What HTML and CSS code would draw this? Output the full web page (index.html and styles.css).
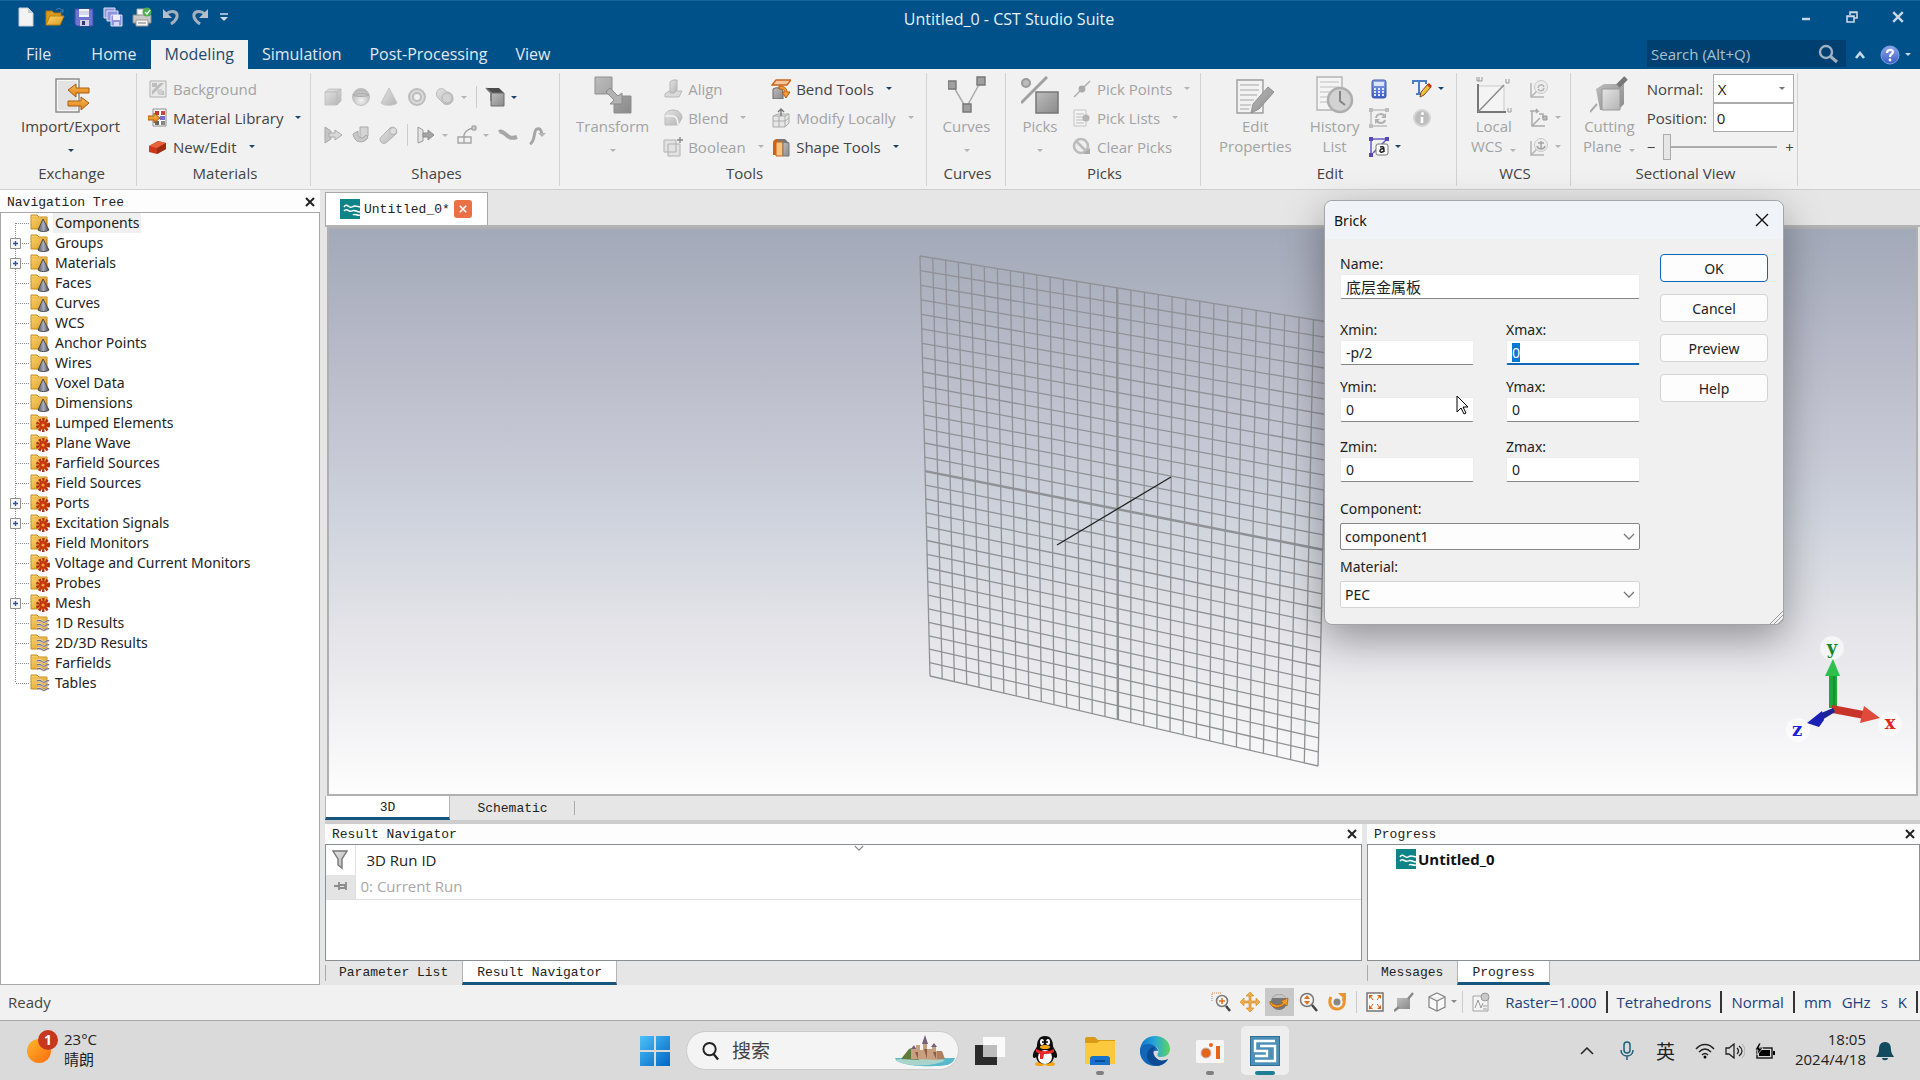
FILE: index.html
```html
<!DOCTYPE html>
<html lang="en">
<head>
    <meta charset="UTF-8">
    <meta name="viewport" content="width=device-width, initial-scale=1.0">
    <title>Untitled_0 - CST Studio Suite</title>
    <link rel="stylesheet" href="styles.css">
</head>
<body>
    <!-- Icon sprite -->
    <svg class="sprite" aria-hidden="true">
        <defs>
            <linearGradient id="gGray" x1="0" y1="0" x2="1" y2="1"><stop offset="0" stop-color="#e4e4e4"/><stop offset="1" stop-color="#b4b4b4"/></linearGradient>
            <linearGradient id="gDark" x1="0" y1="0" x2="1" y2="1"><stop offset="0" stop-color="#bdbdbd"/><stop offset="1" stop-color="#8a8a8a"/></linearGradient>
            <linearGradient id="gFolder" x1="0" y1="0" x2="1" y2="1"><stop offset="0" stop-color="#fbd674"/><stop offset="1" stop-color="#dd9a1c"/></linearGradient>
            <linearGradient id="gOrange" x1="0" y1="0" x2="0" y2="1"><stop offset="0" stop-color="#fbb84e"/><stop offset="1" stop-color="#e0801a"/></linearGradient>
            <linearGradient id="gCone" x1="0" y1="0" x2="1" y2="0"><stop offset="0" stop-color="#55565a"/><stop offset=".5" stop-color="#a9adc0"/><stop offset="1" stop-color="#45464a"/></linearGradient>
            <linearGradient id="gWin" x1="0" y1="0" x2="1" y2="1"><stop offset="0" stop-color="#4cc2f8"/><stop offset="1" stop-color="#0064c4"/></linearGradient>
            <linearGradient id="gSun" x1="0" y1="0" x2="1" y2="1"><stop offset="0" stop-color="#fbb829"/><stop offset="1" stop-color="#fb6a10"/></linearGradient>
            <linearGradient id="gEdge" x1="0" y1="0" x2="1" y2="0"><stop offset="0" stop-color="#0f6fc9"/><stop offset=".5" stop-color="#28a9d8"/><stop offset="1" stop-color="#5fd45c"/></linearGradient>
            <linearGradient id="gBlue" x1="0" y1="0" x2="0" y2="1"><stop offset="0" stop-color="#8fa6ec"/><stop offset="1" stop-color="#3a5cc4"/></linearGradient>
            <radialGradient id="gBall" cx=".5" cy=".7" r=".6"><stop offset="0" stop-color="#f2f2f2"/><stop offset="1" stop-color="#b8b8b8"/></radialGradient>
        </defs>
        <symbol id="arrow" viewBox="0 0 8 5"><path d="M1 1h6L4 4z" fill="currentColor"/></symbol>
        <symbol id="chevron" viewBox="0 0 12 8"><path d="M1 1l5 5 5-5" fill="none" stroke="currentColor" stroke-width="1.3"/></symbol>
        <symbol id="cross" viewBox="0 0 10 10"><path d="M1 1l8 8M9 1L1 9" fill="none" stroke="currentColor" stroke-width="2"/></symbol>
        <symbol id="cross-thin" viewBox="0 0 14 14"><path d="M1 1l12 12M13 1L1 13" fill="none" stroke="currentColor" stroke-width="1.4"/></symbol>

        <!-- quick access -->
        <symbol id="new" viewBox="0 0 20 20"><path d="M3 1h9l5 5v13H3z" fill="#f3f3f3" stroke="#c9cfd4"/><path d="M12 1v5h5z" fill="#c8cccf"/></symbol>
        <symbol id="open" viewBox="0 0 20 20"><path d="M1 18V4h6l2 2h7v4" fill="#d99a20" stroke="#b67508"/><path d="M1 18l4-9h14l-4 9z" fill="url(#gFolder)" stroke="#c0820e"/><path d="M11 3c3-3 6-1 7 2m0-3v3h-3" fill="none" stroke="#5580a8"/></symbol>
        <symbol id="save" viewBox="0 0 20 20"><path d="M1 2h18v17H3l-2-2z" fill="#6e74d4" stroke="#4347a4"/><path d="M5 2h10v8H5z" fill="#f2f4fa"/><path d="M5 5h10M5 7h10" stroke="#b5bbd4"/><path d="M6 13h9v6H6z" fill="#cfd2e2"/><path d="M8 14h3v4H8z" fill="#33367c"/></symbol>
        <symbol id="saveall" viewBox="0 0 20 20"><g fill="#8d93dd" stroke="#dfe2f6"><path d="M1 1h11v10H1z"/><path d="M4 4h11v10H4z"/><path d="M8 8h11v11H8z"/></g><path d="M10 8h7v5h-7z" fill="#eef"/><path d="M11 15h5v4h-5z" fill="#d4d7ee"/></symbol>
        <symbol id="print" viewBox="0 0 20 20"><path d="M5 2h9v8H5z" fill="#fafafa" stroke="#aaa"/><path d="M1 8h18v8H1z" fill="#c9c9c9" stroke="#8d8d8d"/><path d="M4 13h12v6H4z" fill="#f4f4f4" stroke="#999"/><path d="M6 16h8" stroke="#777"/><circle cx="15" cy="5" r="4.5" fill="#4caf50"/><path d="M13 5l2 2 3-4" fill="none" stroke="#fff" stroke-width="1.3"/></symbol>
        <symbol id="undo" viewBox="0 0 20 20"><path d="M5 7c6-5 12-2 11 3-1 3-3 5-6 7" fill="none" stroke="#a4b1bd" stroke-width="3"/><path d="M2 2v9h9z" fill="#b7c0c9"/></symbol>
        <symbol id="redo" viewBox="0 0 20 20"><path d="M15 7c-6-5-12-2-11 3 1 3 3 5 6 7" fill="none" stroke="#a4b1bd" stroke-width="3"/><path d="M18 2v9H9z" fill="#b7c0c9"/></symbol>
        <symbol id="more" viewBox="0 0 10 10"><path d="M1 2h8" stroke="#cfdbe6" stroke-width="1.5"/><path d="M1 5h8L5 9z" fill="#cfdbe6"/></symbol>
        <symbol id="minimize" viewBox="0 0 12 12"><path d="M2 8h8" stroke="#c9d8e6" stroke-width="2.4"/></symbol>
        <symbol id="restore" viewBox="0 0 12 12"><path d="M4 4V1h7v6H8M1 5h7v6H1zM1 5.500h7M4 1.500h7" fill="none" stroke="#c9d8e6" stroke-width="1.6"/></symbol>
        <symbol id="magnifier" viewBox="0 0 20 20"><circle cx="8" cy="8" r="6" fill="none" stroke="#9fb2c2" stroke-width="2.400"/><path d="M12 12l7 6" stroke="#9fb2c2" stroke-width="3"/></symbol>
        <symbol id="collapse" viewBox="0 0 12 8"><path d="M2 7l4-5 4 5" fill="none" stroke="#c9d8e6" stroke-width="2.600"/></symbol>
        <symbol id="help" viewBox="0 0 20 20"><circle cx="10" cy="10" r="9" fill="url(#gBlue)" stroke="#7fa0e0"/><path d="M7 8c0-4 6-4 6-1 0 2-3 2-3 5" fill="none" stroke="#fff" stroke-width="2.200"/><circle cx="10" cy="15" r="1.400" fill="#fff"/></symbol>

        <!-- ribbon -->
        <symbol id="exchange" viewBox="0 0 38 38"><path d="M4 3h23v33H4z" fill="#f8f8f8" stroke="#8c8c8c" stroke-width="1.5"/><path d="M6 5h19v29H6z" fill="#e3e3e3"/><path d="M16 14l8-6v4h13v5H24v4z" fill="url(#gOrange)" stroke="#a85c10"/><path d="M37 27l-8-6v4H16v5h13v4z" fill="url(#gOrange)" stroke="#a85c10"/></symbol>
        <symbol id="background" viewBox="0 0 20 20"><path d="M2 2h16v16H2z" fill="#e9e9e9" stroke="#b0b0b0"/><path d="M4 4h5v4H4zM4 12l8-8h4L4 16zM11 12h5v4h-5z" fill="#bcbcbc"/><circle cx="12" cy="13" r="3" fill="#cfcfcf"/></symbol>
        <symbol id="library" viewBox="0 0 20 20"><path d="M5 1h13v17H5z" fill="#fafafa" stroke="#8c8c8c"/><path d="M7 3h4v4H7z" fill="#c0392b"/><path d="M13 3h4v4h-4z" fill="#c44"/><path d="M12 8h5v4h-5z" fill="#7a6cc4"/><path d="M7 13h4v4H7z" fill="#666"/><path d="M13 13h4v4h-4z" fill="#888"/><path d="M0 8h6V5l6 5-6 5v-3H0z" fill="url(#gOrange)" stroke="#a85c10"/></symbol>
        <symbol id="newedit" viewBox="0 0 20 20"><path d="M1 9l9-5 8 2v6l-9 5-8-2z" fill="#c93a1c"/><path d="M1 9l9-5 8 2-9 5z" fill="#e8623c"/><path d="M9 11v6l9-5V6z" fill="#a42a12"/></symbol>
        <symbol id="brick" viewBox="0 0 20 20"><path d="M2 5l4-3h12v12l-4 4H2z" fill="url(#gGray)" stroke="#c4c4c4"/><path d="M2 5h12v13M14 5l4-3" fill="none" stroke="#bbb"/></symbol>
        <symbol id="sphere" viewBox="0 0 20 20"><circle cx="10" cy="10" r="8.500" fill="url(#gBall)" stroke="#c2c2c2"/><path d="M2 8c4-2 12-2 16 0-4 2-12 2-16 0z" fill="#c4c4c4" stroke="#aaa"/></symbol>
        <symbol id="cone" viewBox="0 0 20 20"><path d="M10 1l8 15c-3 3-13 3-16 0z" fill="url(#gGray)" stroke="#c4c4c4"/></symbol>
        <symbol id="torus" viewBox="0 0 20 20"><circle cx="10" cy="10" r="6" fill="none" stroke="#bdbdbd" stroke-width="6"/><circle cx="10" cy="10" r="6" fill="none" stroke="#dadada" stroke-width="2"/></symbol>
        <symbol id="cylinder" viewBox="0 0 20 20"><path d="M3 3c3-3 6-1 9 2 4 0 6 3 6 7s-5 7-9 5l-6-6c-2-2-2-6 0-8z" fill="url(#gGray)" stroke="#bbb"/><circle cx="12" cy="11" r="5" fill="#d2d2d2" stroke="#b5b5b5"/></symbol>
        <symbol id="faceted" viewBox="0 0 20 20"><path d="M1 1h13l5 5H7z" fill="#4c4c4c"/><path d="M6 6h13v13H6z" fill="url(#gDark)" stroke="#6f6f6f"/><path d="M1 1l5 5v8" fill="none" stroke="#777" stroke-width="1.5"/></symbol>
        <symbol id="extrude" viewBox="0 0 20 20"><path d="M2 2l6 4v8l-6 4z" fill="#c4c4c4" stroke="#aaa"/><path d="M6 8h6V5l7 5-7 5v-3H6z" fill="#d8d8d8" stroke="#aaa"/></symbol>
        <symbol id="rotate" viewBox="0 0 20 20"><path d="M9 2h8v9l-5 3H9z" fill="#d4d4d4" stroke="#aaa"/><path d="M2 9l5-3v3c0 5 6 5 8 1l2 2c-2 6-13 8-15-3z" fill="#c8c8c8" stroke="#a8a8a8"/></symbol>
        <symbol id="loft" viewBox="0 0 20 20"><path d="M2 12L11 3c3-3 9 2 6 6l-9 8c-4 4-9-1-6-5z" fill="url(#gGray)" stroke="#b2b2b2"/><circle cx="14" cy="6" r="3.500" fill="#dedede" stroke="#b2b2b2"/></symbol>
        <symbol id="sheet" viewBox="0 0 20 20"><path d="M2 2v16l5-2V5z" fill="#e4e4e4" stroke="#9a9a9a"/><path d="M7 8h5V5l6 5-6 5v-3H7z" fill="#a4a4a4" stroke="#8e8e8e"/></symbol>
        <symbol id="trace" viewBox="0 0 20 20"><path d="M1 12h13v6H1zM7 18V10c1-4 5-6 9-7" fill="none" stroke="#a4a4a4" stroke-width="1.4"/><path d="M15 1h4v4h-4z" fill="#ccc" stroke="#999"/></symbol>
        <symbol id="wave" viewBox="0 0 20 20"><path d="M1 7c6-3 7 9 18 5" fill="none" stroke="#a6a6a6" stroke-width="4"/></symbol>
        <symbol id="hook" viewBox="0 0 20 20"><path d="M4 19c6-3 3-14 7-15 3-1 4 1 5 5" fill="none" stroke="#a6a6a6" stroke-width="3"/><path d="M12 8h8l-4 4z" fill="#b5b5b5"/></symbol>
        <symbol id="transform" viewBox="0 0 38 38"><path d="M1 1h17v17H1zM20 20h17v17H20z" fill="url(#gDark)" stroke="#8f8f8f"/><path d="M12 16l4-4 8 8 4-3v11H16l4-4z" fill="#b3b3b3" stroke="#8a8a8a"/></symbol>
        <symbol id="align" viewBox="0 0 20 20"><path d="M2 15l4-3h13l-3 6H2z" fill="#dadada" stroke="#b9b9b9"/><path d="M7 3l3-2h4v10l-3 3H7z" fill="url(#gGray)" stroke="#b4b4b4"/></symbol>
        <symbol id="blend" viewBox="0 0 20 20"><path d="M2 8c0-4 4-6 8-6 5 0 9 3 9 8l-4 7H2z" fill="url(#gGray)" stroke="#bbb"/><path d="M2 8h7c4 0 6 4 6 9" fill="none" stroke="#f4f4f4" stroke-width="1.5"/></symbol>
        <symbol id="boolean" viewBox="0 0 20 20"><path d="M1 3h12v12H1zM5 7h12v12H5z" fill="#dcdcdc" fill-opacity=".7" stroke="#b0b0b0"/><path d="M17 0v6M14 3h6" stroke="#888" stroke-width="1.3"/></symbol>
        <symbol id="bend" viewBox="0 0 20 20"><path d="M5 1h15l-4 5H1z" fill="#f7c59a" stroke="#c8641c" stroke-width="1.4"/><path d="M2 10c5-3 10 0 10 3v7H2z" fill="url(#gDark)" stroke="#666"/><path d="M8 7c5 0 8 2 8 6h3l-4 6-4-6h3c0-2-2-3-6-3z" fill="#f09a3a" stroke="#b85a10"/></symbol>
        <symbol id="modify" viewBox="0 0 20 20"><path d="M2 8l5-2h11v9l-4 4H2zM2 8h12v11M14 8l4-2M2 13h12l4-3M8 8v11" fill="#e6e6e6" stroke="#ababab"/><path d="M10 8V1M7 4l3-3 3 3" fill="none" stroke="#777" stroke-width="1.4"/></symbol>
        <symbol id="shape" viewBox="0 0 20 20"><path d="M5 2h9l4 4H4z" fill="#777"/><path d="M2 6c0-3 2-4 5-4v16H2z" fill="#c8641c"/><path d="M5 5h7v14H5z" fill="#fbc27a" stroke="#c8641c"/><path d="M12 5l6 1v13h-6z" fill="url(#gDark)" stroke="#777"/></symbol>
        <symbol id="curves" viewBox="0 0 38 38"><path d="M4 8l14 24L33 5" fill="none" stroke="#aaa" stroke-width="1.5"/><path d="M0 5h8v8H0zM29 1h8v8h-8zM15 28h8v8h-8z" fill="#a0a0a0" stroke="#777" stroke-width="1.4"/></symbol>
        <symbol id="picks" viewBox="0 0 38 38"><circle cx="5" cy="7" r="4" fill="#bbb" stroke="#999" stroke-width="2"/><path d="M0 27L26 1" stroke="#a0a0a0" stroke-width="3"/><path d="M15 16h22v21H15z" fill="url(#gDark)" stroke="#777" stroke-width="1.5"/></symbol>
        <symbol id="pickpoints" viewBox="0 0 20 20"><path d="M2 18L18 2" stroke="#b0b0b0" stroke-width="1.6"/><circle cx="10" cy="10" r="3.400" fill="#aaa"/></symbol>
        <symbol id="picklists" viewBox="0 0 20 20"><path d="M2 2h12v16H2z" fill="#f4f4f4" stroke="#c4c4c4"/><path d="M4 6h8M4 9h8M4 12h8M4 15h8" stroke="#bbb"/><circle cx="14" cy="10" r="3.500" fill="#b4b4b4"/></symbol>
        <symbol id="clearpicks" viewBox="0 0 20 20"><circle cx="9" cy="9" r="7" fill="#eee" stroke="#bcbcbc" stroke-width="2.600"/><path d="M4 4l11 11" stroke="#bcbcbc" stroke-width="2.600"/><path d="M11 17h7v-6z" fill="#aaa"/></symbol>
        <symbol id="properties" viewBox="0 0 38 38"><path d="M1 4h26v33H1z" fill="#f2f2f2" stroke="#9d9d9d" stroke-width="1.400"/><path d="M4 9h19M4 14h19M4 19h17M4 24h14M4 29h11M4 33h9" stroke="#c0c0c0" stroke-width="1.5"/><path d="M15 37l2-9 15-17 6 5-15 17z" fill="url(#gDark)" stroke="#909090"/></symbol>
        <symbol id="history" viewBox="0 0 38 38"><path d="M1 1h25v33H1z" fill="#f4f4f4" stroke="#b4b4b4" stroke-width="1.4"/><path d="M4 6h19M4 11h19M4 16h10M4 21h8M4 26h8" stroke="#cfcfcf" stroke-width="1.5"/><circle cx="24" cy="24" r="12" fill="#d2d2d2" stroke="#adadad" stroke-width="2.500"/><path d="M24 15v10l5 4" fill="none" stroke="#848484" stroke-width="2"/></symbol>
        <symbol id="calc" viewBox="0 0 20 20"><rect x="3" y="1" width="14" height="18" rx="2" fill="url(#gBlue)" stroke="#4558a8"/><path d="M5 3h10v4H5z" fill="#dde4fb"/><path d="M5 10h10M5 13h10M5 16h10" stroke="#e2e8fc" stroke-width="1.8" stroke-dasharray="2 2"/></symbol>
        <symbol id="refresh" viewBox="0 0 20 20"><path d="M2 18V2h16M2 18h16" fill="none" stroke="#bdbdbd" stroke-width="1.500"/><path d="M0 0h4v4H0zM16 0h4v4h-4zM0 16h4v4H0z" fill="#bdbdbd"/><path d="M7 10c1-5 7-5 9-1M16 12c-1 4-7 4-9 0" fill="none" stroke="#b0b0b0" stroke-width="2"/><path d="M17 5v5h-5zM6 16v-5h5z" fill="#b0b0b0"/></symbol>
        <symbol id="param" viewBox="0 0 20 20"><path d="M2 18V2h16L4 16" fill="none" stroke="#6a5cc8" stroke-width="1.5"/><path d="M0 0h4v4H0zM16 0h4v4h-4zM0 16h4v4H0z" fill="#5648b8"/><rect x="7" y="7" width="12" height="11" rx="2" fill="#fafafa" stroke="#777"/><path d="M11 10c4-1 4 0 4 5m0-3c-5-1-5 4-2 3 1 0 2-1 2-2" fill="none" stroke="#222" stroke-width="1.500"/></symbol>
        <symbol id="textedit" viewBox="0 0 20 20"><path d="M1 5V2h13v3M7 2v13M4 15h6" fill="none" stroke="#4a7ac8" stroke-width="2"/><path d="M8 18l1-5 7-8 3 3-7 8z" fill="#f0c040" stroke="#7a4a18"/><path d="M15 6l2-2 3 3-2 2z" fill="#c83020"/></symbol>
        <symbol id="info" viewBox="0 0 20 20"><circle cx="10" cy="10" r="8" fill="#bdbdbd" stroke="#d4d4d4" stroke-width="2"/><path d="M10 9v6" stroke="#fff" stroke-width="2.600"/><circle cx="10.500" cy="5.500" r="1.500" fill="#fff"/></symbol>
        <symbol id="wcs" viewBox="0 0 38 38"><path d="M3 10h26v26H3z" fill="#f4f4f4" stroke="#c9c9c9"/><path d="M3 8v28h28" fill="none" stroke="#777" stroke-width="2"/><path d="M3 36L29 9" stroke="#888" stroke-width="1.4"/><path d="M2 1v4h5V1M4 1v4M31 3v4h3V3M33 32v4h3v-4" fill="none" stroke="#999"/></symbol>
        <symbol id="wcs1" viewBox="0 0 20 20"><path d="M2 4v14h13M2 18l6-6" fill="none" stroke="#b4b4b4" stroke-width="1.500"/><circle cx="12" cy="8" r="6.500" fill="#ededed" stroke="#c9c9c9"/><path d="M9 9c1-4 5-4 6-1M15 9c-1 4-5 3-6 1" fill="none" stroke="#b4b4b4" stroke-width="1.5"/></symbol>
        <symbol id="wcs2" viewBox="0 0 20 20"><path d="M3 3v15h13M3 18l8-8M1 3h8l-2-2m2 2L7 5M10 6h4v4" fill="none" stroke="#a9a9a9" stroke-width="1.500"/><path d="M14 8h4v4h-4z" fill="#bbb" stroke="#999"/></symbol>
        <symbol id="wcs3" viewBox="0 0 20 20"><path d="M2 4v14h13M2 18l6-6" fill="none" stroke="#b4b4b4" stroke-width="1.500"/><circle cx="12" cy="8" r="6.500" fill="#ededed" stroke="#c9c9c9"/><path d="M12 4v8M9 6h6M8 9c1 4 7 4 8 0" fill="none" stroke="#a4a4a4" stroke-width="1.5"/></symbol>
        <symbol id="cutting" viewBox="0 0 38 38"><path d="M6 13l8-5h20v20l-6 6H10z" fill="url(#gDark)"/><path d="M12 13h18v21H12z" fill="url(#gGray)" stroke="#999"/><path d="M0 36l7-8M27 9l9-7" stroke="#aaa" stroke-width="2"/><path d="M28 10l8-8" stroke="#777" stroke-width="5"/></symbol>

        <!-- tree -->
        <symbol id="twig" viewBox="0 0 20 20"><path d="M5.500 0v20M6 10.500h13" stroke="#888" stroke-dasharray="1 1"/></symbol>
        <symbol id="twig-first" viewBox="0 0 20 20"><path d="M5.500 10v10M6 10.500h13" stroke="#888" stroke-dasharray="1 1"/></symbol>
        <symbol id="twig-last" viewBox="0 0 20 20"><path d="M5.500 0v10M6 10.500h13" stroke="#888" stroke-dasharray="1 1"/></symbol>
        <symbol id="twig-plus" viewBox="0 0 20 20"><path d="M5.500 0v20M12 10.500h7" stroke="#888" stroke-dasharray="1 1"/><path d="M.5 5.500h10v10H.5z" fill="#f6f6f6" stroke="#919191"/><path d="M3 10.500h5M5.500 8v5" stroke="#2f4f9f" stroke-width="1.300"/></symbol>
        <symbol id="folder" viewBox="0 0 20 20"><path d="M1 16V2h6l2 2h8v12z" fill="url(#gFolder)" stroke="#c58a18"/><path d="M1 5h16" stroke="#e9b345"/></symbol>
        <symbol id="f-cone" viewBox="0 0 20 20"><use href="#folder"/><path d="M13 6l6 11c-2 2-9 2-11 0z" fill="url(#gCone)" stroke="#4a4a4a"/></symbol>
        <symbol id="f-gear" viewBox="0 0 20 20"><use href="#folder"/><circle cx="13" cy="12" r="5.500" fill="none" stroke="#b22c10" stroke-width="3" stroke-dasharray="2.300 1.200"/><circle cx="13" cy="12" r="4" fill="#c8320f"/><circle cx="13" cy="12" r="1.500" fill="#f0b030"/></symbol>
        <symbol id="f-wave" viewBox="0 0 20 20"><use href="#folder"/><path d="M7 8c4-3 5 3 8 1s4-1 4-1M7 12c4-3 5 3 8 1s4-1 4-1M7 16c4-3 5 3 8 1s4-1 4-1" fill="none" stroke="#f0e0c0" stroke-width="2.400"/><path d="M7 8c4-3 5 3 8 1s4-1 4-1M7 12c4-3 5 3 8 1s4-1 4-1M7 16c4-3 5 3 8 1s4-1 4-1" fill="none" stroke="#6e6e90" stroke-width="1.200"/></symbol>
        <symbol id="cst" viewBox="0 0 20 20"><path d="M0 0h20v20H0z" fill="#0c8488"/><path d="M4 8c3-5 5 2 8 0s4-1 8 0M4 12c3-4 5 2 8 0s4 1 8 1M13 16c2-2 4 1 7 0" fill="none" stroke="#fff" stroke-width="1.500"/></symbol>
        <symbol id="funnel" viewBox="0 0 16 20"><path d="M1 1h14l-5 8v9l-4-3V9z" fill="url(#gGray)" stroke="#777" stroke-width="1.400"/></symbol>
        <symbol id="pin" viewBox="0 0 14 10"><path d="M0 5h5M5 1v8M5 4h6v3H5M12 1v8" fill="none" stroke="#8c8c8c" stroke-width="1.800"/></symbol>

        <!-- status bar -->
        <symbol id="zoomin" viewBox="0 0 20 20"><path d="M1 9V1h10" fill="none" stroke="#d08040" stroke-dasharray="1 1"/><circle cx="11" cy="9" r="5.500" fill="#f5f5f5" stroke="#777" stroke-width="1.500"/><path d="M8 9h6M11 6v6" stroke="#e0701c" stroke-width="1.500"/><path d="M15 14l4 5" stroke="#444" stroke-width="2.500"/></symbol>
        <symbol id="pan" viewBox="0 0 20 20"><path d="M10 0l4 4h-3v5h5V6l4 4-4 4v-3h-5v5h3l-4 4-4-4h3v-5H4v3l-4-4 4-4v3h5V4H6z" fill="#f0ac48" stroke="#cc8420" stroke-width=".6"/></symbol>
        <symbol id="orbit" viewBox="0 0 20 20"><circle cx="10" cy="10" r="8" fill="#777"/><path d="M3 6c4-5 10-5 14 0z" fill="#c4c4c4"/><path d="M1 9c4 5 9 5 13 2l-2-2 7-3-1 8-2-2c-6 5-12 4-15 0z" fill="#f09a28" stroke="#a85c10" stroke-width=".7"/></symbol>
        <symbol id="zoomout" viewBox="0 0 20 20"><circle cx="9" cy="8" r="6.500" fill="#f5f5f5" stroke="#777" stroke-width="1.500"/><path d="M6 7l3-4 3 4zM6 9h6l-3 4z" fill="#e0701c"/><path d="M14 13l5 6" stroke="#444" stroke-width="2.500"/></symbol>
        <symbol id="spin" viewBox="0 0 20 20"><circle cx="10" cy="10" r="3.500" fill="#888"/><path d="M4 5c-3 6 0 12 6 12s9-6 6-11" fill="none" stroke="#ec9430" stroke-width="3"/><path d="M11 1h8v8z" fill="#ec9430"/></symbol>
        <symbol id="fit" viewBox="0 0 20 20"><path d="M2 1h16v18H2z" fill="#fafafa" stroke="#777" stroke-width="1.500"/><path d="M4 3h4L4 7zM16 3h-4l4 4zM4 17h4l-4-4zM16 17h-4l4-4z" fill="#d8641c"/><path d="M5 4l3 4M15 4l-3 4M5 16l3-4M15 16l-3-4" stroke="#d8641c"/></symbol>
        <symbol id="plane" viewBox="0 0 20 20"><path d="M3 6h13v11H3z" fill="url(#gDark)"/><path d="M0 19l5-4M14 7l5-6" stroke="#888" stroke-width="2.400"/></symbol>
        <symbol id="cube" viewBox="0 0 20 20"><path d="M10 1l8 4v10l-8 4-8-4V5zM2 5l8 4 8-4M10 9v10" fill="#fafafa" stroke="#888" stroke-width="1.300"/></symbol>
        <symbol id="plot" viewBox="0 0 20 20"><path d="M2 4h15v15H2z" fill="#f4f4f4" stroke="#a4a4a4"/><path d="M4 16l3-8 3 8 2-5M12 14h4M12 17h4" fill="none" stroke="#999"/><circle cx="14" cy="5" r="4" fill="#c9c9c9" stroke="#999"/></symbol>

        <!-- taskbar -->
        <symbol id="windows" viewBox="0 0 30 30"><path d="M0 0h14v14H0zM16 0h14v14H16zM0 16h14v14H0zM16 16h14v14H16z" fill="url(#gWin)"/></symbol>
        <symbol id="lens" viewBox="0 0 20 20"><circle cx="9" cy="8" r="6.500" fill="none" stroke="#222" stroke-width="2"/><path d="M13 13l5 6" stroke="#222" stroke-width="2.400"/></symbol>
        <symbol id="castle" viewBox="0 0 62 32"><path d="M2 23h60c-2 7-10 8-20 8-20 1-38-2-40-8z" fill="#58b8cc"/><path d="M2 25c10-3 40-2 50 0-5 6-40 8-50 0z" fill="#a8d4cc"/><path d="M8 24l8-10 6-2 4 10v3z" fill="#5c7c3c"/><path d="M18 24V14h5v-4h4v5h3V8l2-7 2 7v6h5v-3h4v5h4v9z" fill="#c8a080"/><path d="M18 14l3-4 2 4zM29 9l3-9 3 9zM38 12l3-4 3 4z" fill="#75607c"/><path d="M22 17h3v7M31 14h3v10M40 17h3v7" fill="#8c5c44"/><path d="M44 16h5l3 8h-8z" fill="#b08060"/></symbol>
        <symbol id="taskview" viewBox="0 0 30 30"><path d="M0 9h22v20H0z" fill="#2b2b2b"/><path d="M8 1h22v20H8z" fill="#fafafa"/><path d="M8 9h14v12H8z" fill="#bdbdbd"/></symbol>
        <symbol id="qq" viewBox="0 0 26 30"><ellipse cx="8" cy="28" rx="5" ry="2" fill="#f6a418"/><ellipse cx="18" cy="28" rx="5" ry="2" fill="#f6a418"/><path d="M13 0c6 0 8 5 8 10 0 2 5 6 4 11-1 2-3 0-3 0-1 5-4 7-9 7s-8-2-9-7c0 0-2 2-3 0-1-5 4-9 4-11 0-5 2-10 8-10z" fill="#0c0c0c"/><ellipse cx="13" cy="21" rx="7" ry="7" fill="#fff"/><ellipse cx="10" cy="6" rx="2" ry="3" fill="#fff"/><ellipse cx="16" cy="6" rx="2" ry="3" fill="#fff"/><circle cx="11" cy="6" r="1"/><circle cx="15" cy="6" r="1"/><ellipse cx="13" cy="11" rx="5" ry="2" fill="#f6a418"/><path d="M4 13c6 3 12 3 18 0v3c-3 2-7 2-10 2l-1 5H8v-5l-4-2z" fill="#e62828"/></symbol>
        <symbol id="explorer" viewBox="0 0 30 30"><path d="M0 3c0-1 1-2 2-2h8l3 3h17v6H0z" fill="#d89a18"/><path d="M0 7h12l3-2h15v23H0z" fill="#fdc93c"/><path d="M5 29v-6c0-2 1-3 3-3h14c2 0 3 1 3 3v6z" fill="#1472cc"/><path d="M10 25h10" stroke="#0a3c80" stroke-width="1.500"/></symbol>
        <symbol id="edge" viewBox="0 0 30 30"><path d="M0 14C1 5 7 0 15 0c9 0 15 6 15 13 0 5-4 8-9 8-4 0-4-2-3-4 2-4-2-8-7-8-6 0-10 3-11 8z" fill="url(#gEdge)"/><path d="M0 13C3 8 9 7 13 9c3 1 5 4 5 6-8-2-7 8 1 10 4 1 8-1 9-2-2 4-7 7-13 7C5 30-1 22 0 13z" fill="#1266b8"/><path d="M7 20c0-6 4-9 8-9-3 4-2 10 4 13 3 1 7 0 9-1-3 6-10 8-14 6-4-1-7-5-7-9z" fill="#0c4a94"/></symbol>
        <symbol id="recorder" viewBox="0 0 30 30"><rect x="1" y="4" width="28" height="23" rx="2" fill="#f6f6f6"/><circle cx="11" cy="17" r="5" fill="#e8641c" stroke="#bbb"/><circle cx="16" cy="9" r="2" fill="#e8641c"/><path d="M21 10h4v13h-4z" fill="#e8641c"/></symbol>
        <symbol id="cstapp" viewBox="0 0 30 30"><path d="M0 0h30v30H0z" fill="#2d6f98"/><path d="M1 1h28v28H1z" fill="#4c90b8"/><path d="M25 5H5v10h12v5H5M10 10h15v15H5" fill="none" stroke="#fff" stroke-width="2.400"/></symbol>
        <symbol id="caretup" viewBox="0 0 14 8"><path d="M1 7l6-6 6 6" fill="none" stroke="#222" stroke-width="1.500"/></symbol>
        <symbol id="mic" viewBox="0 0 14 20"><rect x="4" y="1" width="6" height="11" rx="3" fill="none" stroke="#1f5f78" stroke-width="1.500"/><path d="M1 9c0 8 12 8 12 0M7 15v4" fill="none" stroke="#1f5f78" stroke-width="1.500"/></symbol>
        <symbol id="wifi" viewBox="0 0 20 16"><path d="M1 6c5-6 13-6 18 0M4 9c4-4 8-4 12 0M7 12c2-2 4-2 6 0" fill="none" stroke="#222" stroke-width="1.500"/><circle cx="10" cy="14" r="1.500"/></symbol>
        <symbol id="volume" viewBox="0 0 20 16"><path d="M1 5h3l5-4v14l-5-4H1zM12 5c2 2 2 4 0 6M14 3c4 3 4 7 0 10" fill="none" stroke="#222" stroke-width="1.300"/><path d="M17 1c4 4 4 10 0 14" fill="none" stroke="#aaa"/></symbol>
        <symbol id="battery" viewBox="0 0 20 16"><path d="M2 5h15v10H2z" fill="none" stroke="#222" stroke-width="1.500"/><path d="M4 7h11v6H4zM18 8h2v4h-2z"/><path d="M4 0L0 7h3l-1 5 6-7H4l2-5z" stroke="#dadada" stroke-width=".8"/></symbol>
        <symbol id="bell" viewBox="0 0 18 20"><path d="M9 1c5 0 6 4 6 8 0 3 2 5 3 7H0c1-2 3-4 3-7 0-4 1-8 6-8zM6 17h6c0 3-6 3-6 0z" fill="#124a60"/></symbol>
        <symbol id="pointer" viewBox="0 0 13 20"><path d="M1 1v16l4-4 3 6 2-1-3-6h5z" fill="#fff" stroke="#000"/></symbol>
    </svg>

    <header class="titlebar">
        <div class="quick">
            <button aria-label="New"><svg><use href="#new"/></svg></button>
            <button aria-label="Open"><svg><use href="#open"/></svg></button>
            <button aria-label="Save"><svg><use href="#save"/></svg></button>
            <button aria-label="Save all"><svg><use href="#saveall"/></svg></button>
            <button aria-label="Print"><svg><use href="#print"/></svg></button>
            <button aria-label="Undo"><svg><use href="#undo"/></svg></button>
            <button aria-label="Redo"><svg><use href="#redo"/></svg></button>
            <button aria-label="Customize"><svg class="more"><use href="#more"/></svg></button>
        </div>
        <div class="title">Untitled_0 - CST Studio Suite</div>
        <div class="window-buttons">
            <button aria-label="Minimize"><svg><use href="#minimize"/></svg></button>
            <button aria-label="Restore"><svg><use href="#restore"/></svg></button>
            <button aria-label="Close"><svg><use href="#cross"/></svg></button>
        </div>
    </header>

    <nav class="menubar">
        <button class="file">File</button>
        <button>Home</button>
        <button class="active">Modeling</button>
        <button>Simulation</button>
        <button>Post-Processing</button>
        <button>View</button>
        <div class="search">
            <input type="text" placeholder="Search (Alt+Q)" aria-label="Search">
            <svg><use href="#magnifier"/></svg>
        </div>
        <button class="mini" aria-label="Collapse ribbon"><svg class="collapse"><use href="#collapse"/></svg></button>
        <button class="mini" aria-label="Help"><svg class="help"><use href="#help"/></svg><svg class="arrow"><use href="#arrow"/></svg></button>
    </nav>

    <div class="ribbon">
        <section class="group exchange">
            <div class="group-body">
                <button class="big"><svg><use href="#exchange"/></svg>Import/Export<svg class="arrow"><use href="#arrow"/></svg></button>
            </div>
            <h2>Exchange</h2>
        </section>
        <section class="group materials">
            <div class="group-body">
                <div class="col">
                    <button class="small" disabled><svg><use href="#background"/></svg>Background</button>
                    <button class="small"><svg><use href="#library"/></svg>Material Library<svg class="arrow"><use href="#arrow"/></svg></button>
                    <button class="small"><svg><use href="#newedit"/></svg>New/Edit<svg class="arrow"><use href="#arrow"/></svg></button>
                </div>
            </div>
            <h2>Materials</h2>
        </section>
        <section class="group shapes">
            <div class="group-body">
                <div class="shape-row">
                    <button disabled aria-label="Brick"><svg><use href="#brick"/></svg></button>
                    <button disabled aria-label="Sphere"><svg><use href="#sphere"/></svg></button>
                    <button disabled aria-label="Cone"><svg><use href="#cone"/></svg></button>
                    <button disabled aria-label="Torus"><svg><use href="#torus"/></svg></button>
                    <button disabled aria-label="Cylinder"><svg><use href="#cylinder"/></svg><svg class="arrow"><use href="#arrow"/></svg></button>
                    <i class="divider"></i>
                    <button aria-label="Faceted"><svg><use href="#faceted"/></svg><svg class="arrow"><use href="#arrow"/></svg></button>
                </div>
                <div class="shape-row">
                    <button disabled aria-label="Extrude"><svg><use href="#extrude"/></svg></button>
                    <button disabled aria-label="Rotate"><svg><use href="#rotate"/></svg></button>
                    <button disabled aria-label="Loft"><svg><use href="#loft"/></svg></button>
                    <i class="divider"></i>
                    <button disabled aria-label="Sheet"><svg><use href="#sheet"/></svg><svg class="arrow"><use href="#arrow"/></svg></button>
                    <button disabled aria-label="Trace"><svg><use href="#trace"/></svg><svg class="arrow"><use href="#arrow"/></svg></button>
                    <button disabled aria-label="Wire"><svg><use href="#wave"/></svg></button>
                    <button disabled aria-label="Bond wire"><svg><use href="#hook"/></svg></button>
                </div>
            </div>
            <h2>Shapes</h2>
        </section>
        <section class="group tools">
            <div class="group-body">
                <button class="big" disabled><svg><use href="#transform"/></svg>Transform<svg class="arrow"><use href="#arrow"/></svg></button>
                <div class="col">
                    <button class="small" disabled><svg><use href="#align"/></svg>Align</button>
                    <button class="small" disabled><svg><use href="#blend"/></svg>Blend<svg class="arrow"><use href="#arrow"/></svg></button>
                    <button class="small" disabled><svg><use href="#boolean"/></svg>Boolean<svg class="arrow"><use href="#arrow"/></svg></button>
                </div>
                <div class="col">
                    <button class="small"><svg><use href="#bend"/></svg>Bend Tools<svg class="arrow"><use href="#arrow"/></svg></button>
                    <button class="small" disabled><svg><use href="#modify"/></svg>Modify Locally<svg class="arrow"><use href="#arrow"/></svg></button>
                    <button class="small"><svg><use href="#shape"/></svg>Shape Tools<svg class="arrow"><use href="#arrow"/></svg></button>
                </div>
            </div>
            <h2>Tools</h2>
        </section>
        <section class="group curves">
            <div class="group-body">
                <button class="big" disabled><svg><use href="#curves"/></svg>Curves<svg class="arrow"><use href="#arrow"/></svg></button>
            </div>
            <h2>Curves</h2>
        </section>
        <section class="group picks">
            <div class="group-body">
                <button class="big" disabled><svg><use href="#picks"/></svg>Picks<svg class="arrow"><use href="#arrow"/></svg></button>
                <div class="col">
                    <button class="small" disabled><svg><use href="#pickpoints"/></svg>Pick Points<svg class="arrow"><use href="#arrow"/></svg></button>
                    <button class="small" disabled><svg><use href="#picklists"/></svg>Pick Lists<svg class="arrow"><use href="#arrow"/></svg></button>
                    <button class="small" disabled><svg><use href="#clearpicks"/></svg>Clear Picks</button>
                </div>
            </div>
            <h2>Picks</h2>
        </section>
        <section class="group edit">
            <div class="group-body">
                <button class="big" disabled><svg><use href="#properties"/></svg><span>Edit</span><span>Properties</span></button>
                <button class="big" disabled><svg><use href="#history"/></svg><span>History</span><span>List</span></button>
                <div class="col">
                    <button class="small" aria-label="Calculator"><svg><use href="#calc"/></svg></button>
                    <button class="small" disabled aria-label="Update"><svg><use href="#refresh"/></svg></button>
                    <button class="small" aria-label="Parametrize"><svg><use href="#param"/></svg><svg class="arrow"><use href="#arrow"/></svg></button>
                </div>
                <div class="col">
                    <button class="small" aria-label="Comment"><svg><use href="#textedit"/></svg><svg class="arrow"><use href="#arrow"/></svg></button>
                    <button class="small" disabled aria-label="Information"><svg><use href="#info"/></svg></button>
                </div>
            </div>
            <h2>Edit</h2>
        </section>
        <section class="group wcs">
            <div class="group-body">
                <button class="big" disabled><svg><use href="#wcs"/></svg><span>Local</span><span>WCS <svg class="arrow"><use href="#arrow"/></svg></span></button>
                <div class="col">
                    <button class="small" disabled aria-label="Transform WCS"><svg><use href="#wcs1"/></svg></button>
                    <button class="small" disabled aria-label="Align WCS"><svg><use href="#wcs2"/></svg><svg class="arrow"><use href="#arrow"/></svg></button>
                    <button class="small" disabled aria-label="Fix WCS"><svg><use href="#wcs3"/></svg><svg class="arrow"><use href="#arrow"/></svg></button>
                </div>
            </div>
            <h2>WCS</h2>
        </section>
        <section class="group sectional">
            <div class="group-body">
                <button class="big" disabled><svg><use href="#cutting"/></svg><span>Cutting</span><span>Plane <svg class="arrow"><use href="#arrow"/></svg></span></button>
                <div class="plane-form">
                    <label for="normal">Normal:</label>
                    <div class="drop">
                        <select id="normal"><option>X</option><option>Y</option><option>Z</option></select>
                        <svg class="arrow"><use href="#arrow"/></svg>
                    </div>
                    <label for="position">Position:</label>
                    <input type="text" id="position" value="0">
                    <div class="slider">
                        <button aria-label="Decrease">−</button>
                        <input type="range" value="0" aria-label="Plane position">
                        <button aria-label="Increase">+</button>
                    </div>
                </div>
            </div>
            <h2>Sectional View</h2>
        </section>
    </div>

    <main class="workspace">
        <aside class="nav-panel">
            <div class="panel-head">Navigation Tree<button aria-label="Close"><svg><use href="#cross"/></svg></button></div>
            <ul class="tree">
                <li><svg><use href="#twig-first"/></svg><svg><use href="#f-cone"/></svg><span class="selected">Components</span></li>
                <li><svg><use href="#twig-plus"/></svg><svg><use href="#f-cone"/></svg><span>Groups</span></li>
                <li><svg><use href="#twig-plus"/></svg><svg><use href="#f-cone"/></svg><span>Materials</span></li>
                <li><svg><use href="#twig"/></svg><svg><use href="#f-cone"/></svg><span>Faces</span></li>
                <li><svg><use href="#twig"/></svg><svg><use href="#f-cone"/></svg><span>Curves</span></li>
                <li><svg><use href="#twig"/></svg><svg><use href="#f-cone"/></svg><span>WCS</span></li>
                <li><svg><use href="#twig"/></svg><svg><use href="#f-cone"/></svg><span>Anchor Points</span></li>
                <li><svg><use href="#twig"/></svg><svg><use href="#f-cone"/></svg><span>Wires</span></li>
                <li><svg><use href="#twig"/></svg><svg><use href="#f-cone"/></svg><span>Voxel Data</span></li>
                <li><svg><use href="#twig"/></svg><svg><use href="#f-cone"/></svg><span>Dimensions</span></li>
                <li><svg><use href="#twig"/></svg><svg><use href="#f-gear"/></svg><span>Lumped Elements</span></li>
                <li><svg><use href="#twig"/></svg><svg><use href="#f-gear"/></svg><span>Plane Wave</span></li>
                <li><svg><use href="#twig"/></svg><svg><use href="#f-gear"/></svg><span>Farfield Sources</span></li>
                <li><svg><use href="#twig"/></svg><svg><use href="#f-gear"/></svg><span>Field Sources</span></li>
                <li><svg><use href="#twig-plus"/></svg><svg><use href="#f-gear"/></svg><span>Ports</span></li>
                <li><svg><use href="#twig-plus"/></svg><svg><use href="#f-gear"/></svg><span>Excitation Signals</span></li>
                <li><svg><use href="#twig"/></svg><svg><use href="#f-gear"/></svg><span>Field Monitors</span></li>
                <li><svg><use href="#twig"/></svg><svg><use href="#f-gear"/></svg><span>Voltage and Current Monitors</span></li>
                <li><svg><use href="#twig"/></svg><svg><use href="#f-gear"/></svg><span>Probes</span></li>
                <li><svg><use href="#twig-plus"/></svg><svg><use href="#f-gear"/></svg><span>Mesh</span></li>
                <li><svg><use href="#twig"/></svg><svg><use href="#f-wave"/></svg><span>1D Results</span></li>
                <li><svg><use href="#twig"/></svg><svg><use href="#f-wave"/></svg><span>2D/3D Results</span></li>
                <li><svg><use href="#twig"/></svg><svg><use href="#f-wave"/></svg><span>Farfields</span></li>
                <li><svg><use href="#twig-last"/></svg><svg><use href="#f-wave"/></svg><span>Tables</span></li>
            </ul>
        </aside>

        <div class="content">
            <div class="doc-tabs">
                <div class="doc-tab"><svg><use href="#cst"/></svg>Untitled_0*<button aria-label="Close tab"><svg><use href="#cross"/></svg></button></div>
            </div>
            <div class="viewport">
                <svg class="scene" viewBox="0 0 1587 565">
                    <g id="grid"></g>
                    <path d="M728 316l114-68" stroke="#222" stroke-width="1.300"/>
                </svg>
                <svg class="axes" viewBox="0 0 120 110">
                    <g fill="#fff" fill-opacity=".6"><circle cx="48" cy="14" r="12"/><circle cx="106" cy="90" r="12"/><circle cx="14" cy="96" r="12"/></g>
                    <path d="M45 74V42h8v32z" fill="#1fa83a"/><path d="M41 42l8-17 7 17z" fill="#2ec04a"/><path d="M50 42v32" stroke="#0d7a24"/>
                    <path d="M48 71l32 6v8l-32-6z" fill="#c8342a"/><path d="M80 72l16 12-20 5z" fill="#e04a3c"/>
                    <path d="M49 74l-14 6 3 6 13-8z" fill="#1c2494"/><path d="M38 77l-15 12 12 4 5-7z" fill="#1a20b4"/>
                    <text x="48" y="20" fill="#12882a">y</text>
                    <text x="106" y="95" fill="#e0281c">x</text>
                    <text x="13" y="102" fill="#1c22d8">z</text>
                </svg>
            </div>
            <div class="tabs view-tabs">
                <button class="active">3D</button>
                <button>Schematic</button>
            </div>
            <div class="docks">
                <section class="dock results">
                    <div class="panel-head">Result Navigator<button aria-label="Close"><svg><use href="#cross"/></svg></button></div>
                    <div class="dock-body">
                        <table>
                            <tr><td class="mark"><svg class="funnel"><use href="#funnel"/></svg></td><th>3D Run ID</th></tr>
                            <tr class="current"><td class="mark"><svg class="pin"><use href="#pin"/></svg></td><td>0: Current Run</td></tr>
                        </table>
                        <svg class="sort"><use href="#chevron"/></svg>
                    </div>
                    <div class="tabs">
                        <button>Parameter List</button>
                        <button class="active">Result Navigator</button>
                    </div>
                </section>
                <section class="dock progress">
                    <div class="panel-head">Progress<button aria-label="Close"><svg><use href="#cross"/></svg></button></div>
                    <div class="dock-body">
                        <div class="job"><svg><use href="#cst"/></svg>Untitled_0</div>
                    </div>
                    <div class="tabs">
                        <button>Messages</button>
                        <button class="active">Progress</button>
                    </div>
                </section>
            </div>
        </div>
    </main>

    <footer class="status">
        <span class="ready">Ready</span>
        <div class="view-tools">
            <button aria-label="Zoom in"><svg><use href="#zoomin"/></svg></button>
            <button aria-label="Pan"><svg><use href="#pan"/></svg></button>
            <button class="on" aria-label="Rotate"><svg><use href="#orbit"/></svg></button>
            <button aria-label="Zoom"><svg><use href="#zoomout"/></svg></button>
            <button aria-label="Spin"><svg><use href="#spin"/></svg></button>
            <i class="divider"></i>
            <button aria-label="Fit"><svg><use href="#fit"/></svg></button>
            <button aria-label="Working plane"><svg><use href="#plane"/></svg></button>
            <button class="split" aria-label="Perspective"><svg><use href="#cube"/></svg><svg class="arrow"><use href="#arrow"/></svg></button>
            <i class="divider"></i>
            <button aria-label="Plot"><svg><use href="#plot"/></svg></button>
        </div>
        <span class="cell">Raster=1.000</span>
        <span class="cell">Tetrahedrons</span>
        <span class="cell">Normal</span>
        <span class="cell units"><span>mm</span><span>GHz</span><span>s</span><span>K</span></span>
    </footer>

    <div class="taskbar">
        <div class="weather">
            <svg viewBox="0 0 34 36"><circle cx="13" cy="22" r="12" fill="url(#gSun)"/><circle cx="22" cy="11" r="10" fill="#c8371c"/><text x="22" y="16">1</text></svg>
            <div>23°C<br>晴朗</div>
        </div>
        <div class="apps">
            <button aria-label="Start"><svg><use href="#windows"/></svg></button>
            <label class="task-search">
                <svg class="lens"><use href="#lens"/></svg>
                <input type="text" placeholder="搜索" aria-label="搜索">
                <svg class="castle"><use href="#castle"/></svg>
            </label>
            <button aria-label="Task view"><svg><use href="#taskview"/></svg></button>
            <button aria-label="QQ"><svg><use href="#qq"/></svg></button>
            <button class="running" aria-label="File Explorer"><svg><use href="#explorer"/></svg></button>
            <button aria-label="Edge"><svg><use href="#edge"/></svg></button>
            <button class="running" aria-label="Recorder"><svg><use href="#recorder"/></svg></button>
            <button class="current" aria-label="CST Studio Suite"><svg><use href="#cstapp"/></svg></button>
        </div>
        <div class="tray">
            <svg class="caretup"><use href="#caretup"/></svg>
            <svg class="mic"><use href="#mic"/></svg>
            <span class="ime">英</span>
            <div class="net">
                <svg><use href="#wifi"/></svg>
                <svg><use href="#volume"/></svg>
                <svg><use href="#battery"/></svg>
            </div>
            <div class="clock">18:05<br>2024/4/18</div>
            <svg class="bell"><use href="#bell"/></svg>
        </div>
    </div>

    <!-- Brick dialog floats over the viewport -->
    <form class="dialog" role="dialog" aria-label="Brick">
        <div class="dialog-head">Brick<button type="button" aria-label="Close"><svg><use href="#cross-thin"/></svg></button></div>
        <div class="dialog-body">
            <div class="fields">
                <div class="field wide"><label for="name">Name:</label><input type="text" id="name" value="底层金属板"></div>
                <div class="field x"><label for="xmin">Xmin:</label><input type="text" id="xmin" value="-p/2"></div>
                <div class="field x"><label for="xmax">Xmax:</label><input type="text" id="xmax" value="0"></div>
                <div class="field y"><label for="ymin">Ymin:</label><input type="text" id="ymin" value="0"></div>
                <div class="field y"><label for="ymax">Ymax:</label><input type="text" id="ymax" value="0"></div>
                <div class="field z"><label for="zmin">Zmin:</label><input type="text" id="zmin" value="0"></div>
                <div class="field z"><label for="zmax">Zmax:</label><input type="text" id="zmax" value="0"></div>
                <div class="field wide component"><label for="component">Component:</label>
                    <div class="drop focus"><select id="component"><option>component1</option></select><svg><use href="#chevron"/></svg></div>
                </div>
                <div class="field wide"><label for="material">Material:</label>
                    <div class="drop"><select id="material"><option>PEC</option></select><svg><use href="#chevron"/></svg></div>
                </div>
            </div>
            <div class="actions">
                <button type="button" class="default">OK</button>
                <button type="button">Cancel</button>
                <button type="button">Preview</button>
                <button type="button">Help</button>
            </div>
        </div>
        <svg class="grip" viewBox="0 0 14 14"><path d="M1 14L14 1M5 14l9-9M9 14l5-5" stroke="#999"/></svg>
        <svg class="pointer"><use href="#pointer"/></svg>
    </form>

    <script src="script.js"></script>
</body>
</html>
```

FILE: styles.css
```css
* {
    box-sizing: border-box;
}
body {
    margin: 0;
    height: 100vh;
    display: flex;
    flex-direction: column;
    overflow: hidden;
    position: relative;
    font-family: "Open Sans", "Noto Sans CJK SC", sans-serif;
    font-size: 15px;
    color: #444;
    background: #e6e6e6;
}
button, input, select {
    font: inherit;
    color: inherit;
}
button {
    background: none;
    border: none;
    padding: 0;
}
svg {
    display: block;
    flex: none;
}
.sprite {
    position: absolute;
    width: 0;
    height: 0;
}
.arrow {
    width: 8px;
    height: 5px;
    color: #1a4568;
}
:disabled .arrow {
    color: #b4b4b4;
}
.divider {
    width: 1px;
    height: 22px;
    background: #ccc;
}

/* title bar */
.titlebar {
    display: grid;
    grid-template-columns: 1fr auto 1fr;
    align-items: center;
    height: 40px;
    padding: 0 16px;
    background: #00508a;
    border-top: 1px solid #1565a0;
    color: #e8f0f6;
    font-size: 16px;
}
.quick {
    display: flex;
    align-items: center;
    gap: 9px;
    padding-bottom: 8px;
}
.quick svg {
    width: 20px;
    height: 20px;
}
.quick .more {
    width: 10px;
    height: 10px;
}
.title {
    padding: 0 0 4px 98px;
}
.window-buttons {
    display: flex;
    justify-content: flex-end;
    gap: 34px;
    padding-bottom: 8px;
    color: #c9d8e6;
}
.window-buttons svg {
    width: 12px;
    height: 12px;
}

/* ribbon tabs */
.menubar {
    display: flex;
    height: 29px;
    background: #00508a;
    color: #e0e9f1;
    font-size: 16px;
}
.menubar button {
    padding: 0 14px;
    line-height: 29px;
}
.menubar .file {
    padding: 0 26px;
}
.menubar .active {
    background: #f1f1f1;
    color: #1d4a6e;
}
.search {
    display: flex;
    align-items: center;
    width: 199px;
    height: 27px;
    margin-left: auto;
    padding: 0 8px 0 4px;
    background: #004070;
    font-size: 15px;
}
.search input {
    flex: 1;
    min-width: 0;
    padding: 0;
    border: none;
    outline: none;
    background: none;
}
.search input::placeholder {
    color: #a9c0d2;
}
.search svg {
    width: 20px;
    height: 20px;
}
.menubar .mini {
    display: flex;
    align-items: center;
    gap: 4px;
    padding: 0 8px;
}
.menubar .mini + .mini {
    padding-left: 6px;
}
.menubar .mini .arrow {
    color: #c9d8e6;
}
.collapse {
    width: 12px;
    height: 8px;
}
.help {
    width: 20px;
    height: 20px;
}

/* ribbon */
.ribbon {
    display: flex;
    height: 121px;
    background: #f1f1f1;
    border-bottom: 1px solid #d0d0d0;
}
.group {
    display: flex;
    flex-direction: column;
    position: relative;
    flex: none;
}
.group::after {
    content: "";
    position: absolute;
    right: 0;
    top: 4px;
    bottom: 3px;
    border-right: 1px solid #d2d2d2;
}
.group-body {
    display: flex;
    height: 93px;
    padding-top: 5px;
}
.group h2 {
    margin: 0;
    padding-left: 2px;
    font-size: 15px;
    font-weight: 400;
    line-height: 22px;
    text-align: center;
}
.exchange { width: 137px; padding-left: 4px; }
.materials { width: 174px; }
.shapes { width: 249px; }
.tools { width: 367px; }
.curves { width: 79px; }
.picks { width: 195px; }
.edit { width: 256px; }
.wcs { width: 114px; }
.sectional { width: 227px; }
.exchange .group-body, .curves .group-body {
    justify-content: center;
}
.materials .group-body { padding-left: 11px; }
.tools .group-body { padding-left: 16px; }
.picks .group-body { padding-left: 8px; }
.edit .group-body { padding-left: 18px; }
.wcs .group-body { padding-left: 14px; }
.sectional .group-body { padding-left: 12px; }
.big {
    display: flex;
    flex-direction: column;
    align-items: center;
    padding-top: 2px;
    line-height: 20px;
}
.big > svg:first-child {
    width: 38px;
    height: 38px;
    margin-bottom: 2px;
}
.big > .arrow {
    margin-top: 12px;
}
.big span {
    display: flex;
    align-items: flex-end;
    gap: 6px;
}
.big span .arrow {
    margin-bottom: 3px;
}
.big:disabled, .small:disabled {
    color: #a3a3a3;
}
.col {
    display: flex;
    flex-direction: column;
}
.small {
    display: flex;
    align-items: center;
    gap: 5px;
    height: 29px;
    white-space: nowrap;
}
.small > svg:first-child {
    width: 20px;
    height: 20px;
}
.small .arrow {
    margin-left: 6px;
}
.tools .col {
    width: 108px;
    margin-left: 14px;
}
.tools .col + .col {
    margin-left: 0;
}
.picks .big {
    width: 52px;
}
.picks .col {
    margin-left: 6px;
}
.edit .big + .big {
    margin-left: 18px;
}
.edit .col {
    width: 43px;
    margin-left: 9px;
}
.edit .col + .col {
    margin-left: 0;
}
.edit .small .arrow, .wcs .small .arrow {
    margin-left: 0;
}
.wcs .col {
    margin-left: 12px;
}
.shapes .group-body {
    flex-direction: column;
    padding-top: 9px;
    padding-left: 12px;
}
.shape-row {
    display: flex;
    align-items: center;
    gap: 8px;
    height: 38px;
}
.shape-row button {
    display: flex;
    align-items: center;
    gap: 5px;
}
.shape-row button > svg:first-child {
    width: 20px;
    height: 20px;
}
.plane-form {
    display: grid;
    grid-template-columns: 66px 81px;
    grid-auto-rows: 29px;
    align-items: center;
    margin-left: 11px;
}
.plane-form .drop, .plane-form #position {
    width: 100%;
    height: 29px;
    border: 1px solid #ababab;
    background: #fff;
    color: #222;
}
.plane-form #position {
    padding: 0 3px;
}
.drop {
    display: grid;
    align-items: center;
}
.drop > * {
    grid-area: 1 / 1;
}
.drop select {
    width: 100%;
    appearance: none;
    border: none;
    outline: none;
    background: none;
    padding: 0 4px;
}
.drop svg {
    justify-self: end;
    margin-right: 7px;
    pointer-events: none;
}
.drop .arrow {
    color: #777;
}
.slider {
    grid-column: 1 / 3;
    display: flex;
    align-items: center;
    gap: 8px;
    height: 26px;
}
.slider input {
    flex: 1;
    min-width: 0;
    height: 26px;
    margin: 0;
    appearance: none;
    background: linear-gradient(#ababab, #ababab) center / 100% 2px no-repeat;
}
.slider input::-webkit-slider-thumb {
    appearance: none;
    width: 8px;
    height: 26px;
    border: 1px solid #ababab;
    background: #e6e6e6;
}

/* workspace */
.workspace {
    flex: 1;
    display: flex;
    gap: 5px;
    min-height: 0;
}
.panel-head, .doc-tab, .tabs {
    font-family: "Liberation Mono", monospace;
    font-size: 13px;
    color: #222;
}
.panel-head {
    display: flex;
    align-items: center;
    justify-content: space-between;
    height: 20px;
    padding: 0 5px 0 7px;
    background: #fdfdfd;
}
.panel-head svg {
    width: 10px;
    height: 10px;
}
.nav-panel {
    display: flex;
    flex-direction: column;
    width: 320px;
    padding-top: 2px;
    background: #fdfdfd;
}
.tree {
    flex: 1;
    margin: 0;
    padding: 0 0 0 9px;
    list-style: none;
    background: #fff;
    border: 1px solid #a8a8a8;
    font-family: "Noto Sans", sans-serif;
    font-size: 14px;
    color: #222;
}
.tree li {
    display: flex;
    align-items: center;
    height: 20px;
}
.tree svg {
    width: 20px;
    height: 20px;
}
.tree span {
    margin-left: 3px;
    padding: 0 2px;
    line-height: 20px;
}
.tree .selected {
    background: #f0f0f0;
}
.content {
    flex: 1;
    display: flex;
    flex-direction: column;
    min-width: 0;
}
.doc-tabs {
    height: 37px;
    padding-top: 2px;
    border-bottom: 2px solid #b4b4b4;
}
.doc-tab {
    display: flex;
    align-items: center;
    gap: 4px;
    width: 163px;
    height: 33px;
    padding-left: 14px;
    background: #fff;
    border: 1px solid #a8a8a8;
    border-bottom: none;
}
.doc-tab svg {
    width: 20px;
    height: 20px;
}
.doc-tab button {
    display: grid;
    place-items: center;
    width: 18px;
    height: 18px;
    border-radius: 3px;
    background: #ec7046;
    color: #fff;
}
.doc-tab button svg {
    width: 8px;
    height: 8px;
}
.viewport {
    flex: 1;
    position: relative;
    min-height: 0;
    margin: 0 2px;
    border: 2px solid #b0b0b0;
    background: linear-gradient(#a2a9b8, #bdbecc 27%, #cdd2dc 50%, #e3e3e8 70%, #fdfdfd);
}
.scene {
    width: 100%;
    height: 100%;
}
#grid path {
    fill: none;
    stroke: #909195;
    stroke-width: 1.3;
}
#grid .axis {
    stroke-width: 2.4;
}
.axes {
    position: absolute;
    right: 12px;
    bottom: 50px;
    width: 120px;
    height: 110px;
}
.axes text {
    font-family: "DejaVu Serif", serif;
    font-size: 18px;
    font-weight: 700;
    text-anchor: middle;
}
.tabs {
    display: flex;
    height: 24px;
}
.tabs button {
    padding: 0 14px;
}
.tabs .active {
    padding-top: 2px;
    background: #fff;
    border: 1px solid #b4b4b4;
    border-top: none;
    border-bottom: 3px solid #17557f;
}
.view-tabs button {
    width: 125px;
}
.view-tabs button + button {
    background: linear-gradient(#aaa, #aaa) right center / 1px 14px no-repeat;
}
.dock .tabs button:first-child {
    padding-bottom: 2px;
    background: linear-gradient(#aaa, #aaa) left center / 1px 16px no-repeat;
}
.docks {
    display: flex;
    gap: 5px;
    height: 165px;
    border-top: 4px solid #cdcdcd;
}
.dock {
    display: flex;
    flex-direction: column;
    min-width: 0;
}
.results {
    flex: 1037 1 0;
}
.progress {
    flex: 553 1 0;
}
.dock-body {
    flex: 1;
    position: relative;
    background: #fff;
    border: 1px solid #8a8f94;
}
.dock-body table {
    width: 100%;
    border-collapse: collapse;
}
.dock-body td, .dock-body th {
    height: 30px;
    padding: 0 11px;
    text-align: left;
    font-weight: 400;
    color: #222;
}
.dock-body .mark {
    width: 29px;
    padding: 0 6px;
    border-right: 1px solid #e0e0e0;
}
.dock-body .current td {
    height: 24px;
    padding: 0 0 2px 5px;
    border-bottom: 1px solid #e0e0e0;
    color: #a8a8a8;
    line-height: 20px;
}
.dock-body .current .mark {
    padding-left: 8px;
    background: #e4e4e4;
}
.funnel {
    width: 16px;
    height: 20px;
}
.pin {
    width: 14px;
    height: 10px;
}
.sort {
    position: absolute;
    left: 51%;
    top: 0;
    width: 10px;
    height: 7px;
    color: #888;
}
.job {
    display: flex;
    align-items: center;
    gap: 2px;
    height: 28px;
    padding-left: 28px;
    font-weight: 700;
    color: #111;
}
.job svg {
    width: 20px;
    height: 20px;
}

/* status bar */
.status {
    display: flex;
    align-items: center;
    height: 36px;
    padding: 0 2px 2px 8px;
    background: #f1f1f1;
    border-bottom: 1px solid #a8a8a8;
}
.ready {
    margin-right: auto;
}
.view-tools {
    display: flex;
    align-items: center;
}
.view-tools button {
    display: flex;
    align-items: center;
    gap: 3px;
    height: 28px;
    padding: 0 5px 0 4px;
}
.view-tools .split {
    padding: 0 0 0 8px;
}
.view-tools .divider {
    margin: 0 4px;
}
.view-tools button svg:first-child {
    width: 20px;
    height: 20px;
}
.view-tools .arrow {
    color: #888;
}
.view-tools .on {
    background: #c8c8c8;
}
.cell {
    padding: 0 9px;
    border-right: 2px solid #333;
    line-height: 22px;
    color: #23407a;
}
.units {
    display: flex;
    gap: 10px;
}

/* taskbar */
.taskbar {
    display: grid;
    grid-template-columns: 1fr auto 1fr;
    align-items: center;
    height: 59px;
    padding: 0 26px;
    background: #dadada;
    color: #222;
}
.weather {
    display: flex;
    gap: 4px;
    padding-bottom: 4px;
    line-height: 20px;
}
.weather svg {
    width: 34px;
    height: 36px;
}
.weather text {
    fill: #fff;
    font-size: 14px;
    font-weight: 700;
    text-anchor: middle;
}
.apps {
    display: flex;
    align-items: center;
    gap: 7px;
}
.apps button {
    display: grid;
    place-items: center;
    position: relative;
    width: 48px;
    height: 49px;
    border-radius: 5px;
}
.apps button svg {
    width: 30px;
    height: 30px;
}
.apps .running::after, .apps .current::after {
    content: "";
    position: absolute;
    left: 20px;
    bottom: 0;
    width: 8px;
    height: 4px;
    border-radius: 2px;
    background: #808080;
}
.apps .current {
    background: #eee;
}
.apps .current::after {
    left: 14px;
    width: 20px;
    background: #1d7f94;
}
.task-search {
    display: flex;
    align-items: center;
    width: 273px;
    height: 39px;
    padding: 0 3px 0 14px;
    border-radius: 20px;
    background: #f4f4f4;
    border: 1px solid #cacaca;
}
.task-search input {
    flex: 1;
    min-width: 0;
    padding: 0 0 0 12px;
    border: none;
    background: none;
    font-size: 19px;
}
.task-search input::placeholder {
    color: #444;
}
.lens {
    width: 19px;
    height: 20px;
}
.castle {
    width: 62px;
    height: 32px;
}
.tray {
    display: flex;
    justify-content: flex-end;
    align-items: center;
}
.caretup {
    width: 14px;
    height: 8px;
    margin-right: 26px;
}
.mic {
    width: 14px;
    height: 20px;
    margin-right: 22px;
}
.ime {
    margin-right: 20px;
    font-size: 19px;
}
.net {
    display: flex;
    gap: 10px;
    margin-right: 20px;
}
.net svg {
    width: 20px;
    height: 16px;
}
.clock {
    margin-right: 10px;
    padding-bottom: 4px;
    line-height: 20px;
    text-align: right;
}
.bell {
    width: 18px;
    height: 20px;
}

/* brick dialog */
.dialog {
    position: absolute;
    top: 200px;
    right: 136px;
    width: 460px;
    border: 1px solid #a4a4a8;
    border-radius: 8px;
    background: #f0f0f0;
    box-shadow: 0 14px 40px rgba(0,0,0,0.35);
    font-family: "Noto Sans", "Noto Sans CJK SC", sans-serif;
    font-size: 14px;
    color: #222;
}
.dialog-head {
    display: flex;
    align-items: center;
    justify-content: space-between;
    height: 38px;
    padding: 0 14px 0 9px;
    border-radius: 8px 8px 0 0;
    background: #f0f4f9;
    color: #111;
}
.dialog-head svg {
    width: 14px;
    height: 14px;
}
.dialog-body {
    display: flex;
    gap: 20px;
    padding: 15px 15px 16px;
}
.fields {
    flex: 1;
    display: grid;
    grid-template-columns: 1fr 1fr;
    column-gap: 32px;
    row-gap: 7px;
    min-width: 0;
}
.field {
    display: flex;
    flex-direction: column;
    min-width: 0;
}
.wide {
    grid-column: 1 / 3;
}
.x { margin-top: 14px; }
.y { margin-top: 5px; }
.z { margin-top: 8px; }
.component { margin-top: 10px; }
.field label {
    line-height: 20px;
}
.field input {
    width: 100%;
    height: 25px;
    padding: 0 5px;
    border: 1px solid #ececec;
    border-bottom: 1px solid #868686;
    border-radius: 2px;
    outline: none;
    background: #fff;
}
.field #name {
    font-size: 15px;
}
.field #xmax {
    border-bottom: 2px solid #0f67b8;
}
.field input::selection {
    background: #0078d4;
    color: #fff;
}
.field .drop {
    height: 27px;
    margin-top: 4px;
    background: #fdfdfd;
    border: 1px solid #d4d4d4;
    border-radius: 2px;
}
.field .drop.focus {
    border-color: #868686;
}
.drop svg:not(.arrow) {
    width: 12px;
    height: 8px;
    margin-right: 4px;
    color: #777;
}
.actions {
    display: flex;
    flex-direction: column;
    flex: none;
    gap: 12px;
    width: 108px;
}
.actions button {
    height: 28px;
    border: 1px solid #d2d2d2;
    border-radius: 4px;
    background: #fdfdfd;
}
.actions .default {
    border: 1px solid #0f67b8;
}
.grip {
    position: absolute;
    right: 0;
    bottom: 0;
    width: 14px;
    height: 14px;
}
.pointer {
    position: absolute;
    left: 131px;
    top: 194px;
    width: 13px;
    height: 20px;
}
```

FILE: script.js
```js
// Working plane: a 30 x 30 grid seen in perspective
const corners = [[591, 27], [999, 93], [989, 537], [601, 447]];
const cells = 30;

// Map the unit square onto the four corners
const [[x0, y0], [x1, y1], [x2, y2], [x3, y3]] = corners;
const dx1 = x1 - x2, dx2 = x3 - x2, dx3 = x0 - x1 + x2 - x3;
const dy1 = y1 - y2, dy2 = y3 - y2, dy3 = y0 - y1 + y2 - y3;
const det = dx1 * dy2 - dx2 * dy1;
const g = (dx3 * dy2 - dx2 * dy3) / det;
const h = (dx1 * dy3 - dx3 * dy1) / det;

function project(u, v) {
    const w = g * u + h * v + 1;
    const x = ((x1 - x0 + g * x1) * u + (x3 - x0 + h * x3) * v + x0) / w;
    const y = ((y1 - y0 + g * y1) * u + (y3 - y0 + h * y3) * v + y0) / w;
    return x.toFixed(1) + ' ' + y.toFixed(1);
}

function addLine(from, to, axis) {
    const path = document.createElementNS('http://www.w3.org/2000/svg', 'path');
    path.setAttribute('d', `M${from}L${to}`);
    if (axis) path.setAttribute('class', 'axis');
    document.getElementById('grid').appendChild(path);
}

for (let i = 0; i <= cells; i++) {
    const t = i / cells;
    addLine(project(t, 0), project(t, 1), i === cells / 2);
    addLine(project(0, t), project(1, t), i === cells / 2);
}

// The next value to type is Xmax
document.getElementById('xmax').focus();
document.getElementById('xmax').select();
```
